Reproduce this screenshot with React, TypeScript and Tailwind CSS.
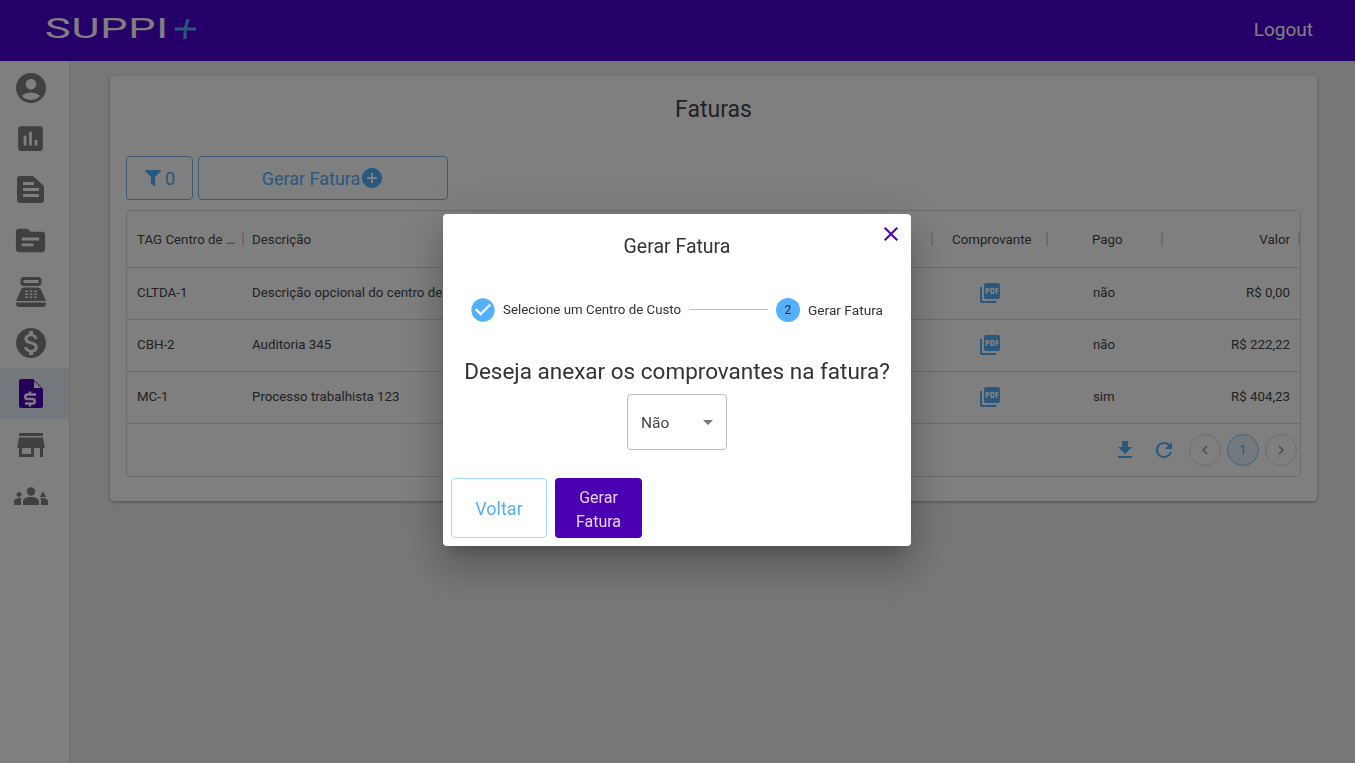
import {
  MdAccountCircle,
  MdAddCircle,
  MdArrowDropDown,
  MdAssessment,
  MdCheckCircle,
  MdChevronLeft,
  MdChevronRight,
  MdClose,
  MdFileDownload,
  MdMonetizationOn,
  MdPictureAsPdf,
  MdPointOfSale,
  MdRefresh,
  MdStore,
  MdTopic,
} from "react-icons/md";
import { FaFilter } from "react-icons/fa";

function TeamIcon() {
  return (
    <svg width="36" height="36" viewBox="0 0 36 36" fill="currentColor">
      <circle cx="18" cy="13.500" r="4.200" />
      <path d="M10 27v-3.500c0-2.500 3-4.500 8-4.500s8 2 8 4.500V27z" />
      <path d="M6 13.500l3 3-3 3-3-3z" />
      <path d="M30 13.500l3.200 5.500h-6.400z" />
      <path d="M1 27v-3.500c0-2 2-3.500 7.500-3.500-.3 1-.5 2-.5 3.500V27z" />
      <path d="M35 27v-3.500c0-2-2-3.500-7.500-3.500 .3 1 .5 2 .5 3.500V27z" />
    </svg>
  );
}

function DocIcon() {
  return (
    <svg width="27" height="27" viewBox="0 0 27 27" fill="currentColor">
      <path
        fillRule="evenodd"
        d="M3 0h13l11 10v14a3 3 0 01-3 3H3a3 3 0 01-3-3V3a3 3 0 013-3zM6 6v3h11V6zM6 12v3h16v-3zM6 18v3h16v-3z"
      />
    </svg>
  );
}

function InvoiceIcon() {
  return (
    <svg width="24" height="29" viewBox="0 0 24 29">
      <path d="M2 0h12l10 10v17a2 2 0 01-2 2H2a2 2 0 01-2-2V2a2 2 0 012-2z" fill="currentColor" />
      <path d="M15 2l7 7h-7z" fill="#fff" />
      <path
        d="M17 15.500H8.500a2.200 2.200 0 000 4.500h5a2.200 2.200 0 010 4.500H6M11 12.500v3M11 24.500v3"
        fill="none"
        stroke="#fff"
        strokeWidth="2.500"
      />
    </svg>
  );
}

const menu = [
  { icon: <MdAccountCircle size={36} /> },
  { icon: <MdAssessment size={33} /> },
  { icon: <DocIcon /> },
  { icon: <MdTopic size={35} /> },
  { icon: <MdPointOfSale size={36} /> },
  { icon: <MdMonetizationOn size={36} /> },
  { icon: <InvoiceIcon />, active: true },
  { icon: <MdStore size={36} /> },
  { icon: <TeamIcon /> },
];

const rows = [
  { tag: "CLTDA-1", desc: "Descrição opcional do centro de custo", pago: "não", valor: "R$ 0,00" },
  { tag: "CBH-2", desc: "Auditoria 345", pago: "não", valor: "R$ 222,22" },
  { tag: "MC-1", desc: "Processo trabalhista 123", pago: "sim", valor: "R$ 404,23" },
];

function HeaderCell({ label, className }: { label: string; className: string }) {
  return (
    <div className={`flex h-full items-center pt-px ${className}`}>
      <span className="min-w-0 flex-1 truncate">{label}</span>
    </div>
  );
}

function Sep() {
  return <div className="h-[14px] w-[2px] shrink-0 bg-[#d9d9d9]" />;
}

function Table() {
  return (
    <div className="mt-[10px] rounded border border-[#dcdcdc] text-[13.3px] text-[#444]">
      <div className="flex h-[57px] items-center border-b border-[#dcdcdc]">
        <HeaderCell label="TAG Centro de Custo" className="w-[115px] pl-[10px] pr-[6px]" />
        <Sep />
        <HeaderCell label="Descrição" className="flex-1 pl-[8px]" />
        <Sep />
        <HeaderCell label="Comprovante" className="w-[113px] pl-[19px]" />
        <Sep />
        <HeaderCell label="Pago" className="w-[113px] pl-[44px]" />
        <Sep />
        <HeaderCell label="Valor" className="w-[135px] pr-[8px] text-right" />
        <Sep />
      </div>
      {rows.map((row) => (
        <div key={row.tag} className="flex h-[52px] items-center border-b border-[#dcdcdc] pb-px">
          <div className="w-[116px] pl-[10px]">{row.tag}</div>
          <div className="flex-1 pl-[9px]">{row.desc}</div>
          <div className="flex w-[115px] justify-center pr-[2px] text-[#52b0ff]">
            <MdPictureAsPdf size={24} />
          </div>
          <div className="w-[115px] pl-[45px]">{row.pago}</div>
          <div className="w-[137px] pr-[10px] text-right">{row.valor}</div>
        </div>
      ))}
      <div className="flex h-[52px] items-center justify-end pr-[3px] text-[#52b0ff]">
        <MdFileDownload size={24} className="mr-[15px]" />
        <MdRefresh size={24} className="mr-[13px]" />
        <div className="flex gap-[6px]">
          <div className="flex h-8 w-8 items-center justify-center rounded-full border border-[#dcdcdc] text-[#999]">
            <MdChevronLeft size={18} />
          </div>
          <div className="flex h-8 w-8 items-center justify-center rounded-full border border-[#8cc8fa] bg-[#e6f3fd] text-[13px] text-[#52b0ff]">
            1
          </div>
          <div className="flex h-8 w-8 items-center justify-center rounded-full border border-[#dcdcdc] text-[#999]">
            <MdChevronRight size={18} />
          </div>
        </div>
      </div>
    </div>
  );
}

function Modal() {
  return (
    <div className="fixed inset-0 flex items-center justify-center bg-black/50">
      <div className="relative mb-[3px] mr-px flex h-[332px] w-[468px] flex-col rounded bg-white p-2 text-[#333] shadow-[0_11px_15px_-7px_rgba(0,0,0,0.2),0_24px_38px_3px_rgba(0,0,0,0.14),0_9px_46px_8px_rgba(0,0,0,0.12)]">
        <button className="absolute right-[8px] top-[8px] text-[#4b00b4]">
          <MdClose size={24} />
        </button>
        <h2 className="mt-[11px] text-center text-[19.500px] leading-[28px]">Gerar Fatura</h2>
        <div className="mt-[35px] flex items-center px-[20px] text-[13.300px]">
          <MdCheckCircle size={28} className="-mx-[2px] text-[#52b0ff]" />
          <span className="ml-[8px]">Selecione um Centro de Custo</span>
          <div className="mx-[8px] h-px flex-1 -translate-y-px bg-[#bdbdbd]" />
          <div className="flex h-6 w-6 items-center justify-center rounded-full bg-[#52b0ff] text-[12px] text-[#222]">
            2
          </div>
          <span className="ml-[8px] text-[13.700px]">Gerar Fatura</span>
        </div>
        <p className="mt-[31px] whitespace-nowrap text-center text-[22.500px] leading-[32px]">
          Deseja anexar os comprovantes na fatura?
        </p>
        <div className="mt-[7px] flex justify-center">
          <div className="flex h-[56px] w-[100px] items-center justify-between rounded border border-[#bdbdbd] pl-[13px] pr-[6px] text-[15.500px] text-[#444]">
            <span className="pt-[3px]">Não</span>
            <MdArrowDropDown size={24} className="text-[#757575]" />
          </div>
        </div>
        <div className="mt-[28px] flex gap-2">
          <button className="h-[60px] w-[96px] rounded border border-[#a6d7ff] text-[18px] text-[#52b0ff]">Voltar</button>
          <button className="h-[60px] w-[87px] rounded bg-[#4b00b4] px-4 pt-[3px] text-[16px] leading-[24px] text-[#e4d4fa]">
            Gerar Fatura
          </button>
        </div>
      </div>
    </div>
  );
}

export default function App() {
  return (
    <div className="flex h-screen flex-col overflow-hidden bg-[#eeeeee] font-['Roboto',sans-serif]">
      <header className="flex h-[61px] shrink-0 items-center justify-between bg-[#4b00d0] pl-[45px] pr-[42px]">
        <div className="flex items-center">
          <span className="inline-block w-[130px] origin-left scale-x-[1.6] pb-[3px] text-[27px] font-normal leading-none tracking-[0.5px] text-white">
            SUPPI
          </span>
          <svg width="22" height="20" viewBox="0 0 22 20" className="mb-[3px] text-[#52b0ff]" fill="none" stroke="currentColor" strokeWidth="3">
            <path d="M0 10h21M10 10L13 0M10 10v10" />
          </svg>
        </div>
        <span className="text-[19px] text-white">Logout</span>
      </header>
      <div className="flex min-h-0 flex-1">
        <nav className="w-[70px] shrink-0 border-r border-[#dcdcdc] bg-white pt-px">
          {menu.map((item, i) => (
            <div
              key={i}
              className={`flex h-[51px] items-center justify-center pr-[8px] ${item.active ? "bg-[#e8f1f9] text-[#4b00b4]" : "text-[#808080]"}`}
            >
              {item.icon}
            </div>
          ))}
        </nav>
        <main className="min-w-0 flex-1 pl-[40px] pr-[38px] pt-[15px]">
          <section className="h-[425px] rounded bg-white p-4 shadow-[0_1px_3px_rgba(0,0,0,0.35)]">
            <h1 className="text-center text-[23px] leading-[36px] text-[#444]">Faturas</h1>
            <div className="mt-[28px] flex gap-[5px]">
              <button className="flex h-[44px] w-[67px] items-center justify-center gap-[4px] rounded border border-[#7db6e6] pl-px text-[18px] text-[#52b0ff]">
                <FaFilter size={16} />0
              </button>
              <button className="flex h-[44px] w-[250px] items-center justify-center rounded border border-[#7db6e6] text-[18px] text-[#52b0ff]">
                Gerar Fatura
                <MdAddCircle size={24} />
              </button>
            </div>
            <Table />
          </section>
        </main>
      </div>
      <Modal />
    </div>
  );
}
